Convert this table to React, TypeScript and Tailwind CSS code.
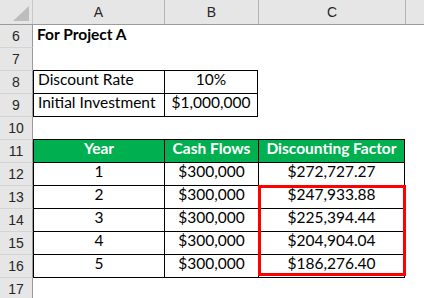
import cn from 'clsx';

// Hoja de cálculo: descuento de flujos de caja, Proyecto A
const rows = [
  { n: 12, year: '1', flow: '$300,000', factor: '$272,727.27' },
  { n: 13, year: '2', flow: '$300,000', factor: '$247,933.88' },
  { n: 14, year: '3', flow: '$300,000', factor: '$225,394.44' },
  { n: 15, year: '4', flow: '$300,000', factor: '$204,904.04' },
  { n: 16, year: '5', flow: '$300,000', factor: '$186,276.40' },
];

const cell = 'h-full flex items-end pb-[2px] px-[4px] whitespace-nowrap';

const RowNum = ({ n }: { n: number }) => (
  <div className="w-[33px] h-full shrink-0 flex items-center justify-center bg-[#e6e6e6] border-r border-b border-r-[#9b9b9b] border-b-[#d4d4d4] text-[14px] text-[#262626] font-['Liberation_Sans',sans-serif]">
    {n}
  </div>
);

export default function App() {
  return (
    <div className="w-[424px] h-[298px] overflow-hidden bg-white font-['Lato',sans-serif] text-[15.5px] text-black relative">
      {/* column headers */}
      <div className="flex h-[25px] bg-[#e6e6e6] border-b border-[#9b9b9b] font-['Liberation_Sans',sans-serif] text-[14px] text-[#262626]">
        <div className="w-[33px] shrink-0 border-r border-[#c8c8c8] flex items-end justify-end pr-[3px] pb-[3px]">
          <svg width="16" height="15" viewBox="0 0 16 15">
            <polygon points="16,0 16,15 0,15" fill="#bdbdbd" />
          </svg>
        </div>
        <div className="w-[131px] flex items-center justify-center">A</div>
        <div className="w-[94px] flex items-center justify-center border-l border-[#b4b4b4]">B</div>
        <div className="w-[147px] flex items-center justify-center border-l border-[#b4b4b4]">C</div>
        <div className="flex-1 border-l border-[#b4b4b4]" />
      </div>

      {/* rows 6-11 */}
      <div className="flex h-[23px]">
        <RowNum n={6} />
        <div className={cn(cell, 'w-[131px] font-bold')}>For Project A</div>
      </div>
      <div className="flex h-[23px]">
        <RowNum n={7} />
        <div className="w-[131px] border-b border-black" />
        <div className="w-[94px] border-b border-black" />
      </div>
      <div className="flex h-[23px]">
        <RowNum n={8} />
        <div className={cn(cell, 'w-[131px] border-l border-b border-black')}>Discount Rate</div>
        <div className={cn(cell, 'w-[94px] border-l border-r border-b border-black justify-center')}>10%</div>
      </div>
      <div className="flex h-[23px]">
        <RowNum n={9} />
        <div className={cn(cell, 'w-[131px] border-l border-b border-black')}>Initial Investment</div>
        <div className={cn(cell, 'w-[94px] border-l border-r border-b border-black justify-center')}>$1,000,000</div>
      </div>
      <div className="flex h-[23px]">
        <RowNum n={10} />
        <div className="w-[131px] border-b border-black" />
        <div className="w-[94px] border-b border-black" />
        <div className="w-[147px] border-b border-black" />
      </div>
      <div className="flex h-[23px]">
        <RowNum n={11} />
        <div className={cn(cell, 'w-[131px] border-l border-b border-black justify-center bg-[#00b050] text-white font-bold')}>Year</div>
        <div className={cn(cell, 'w-[94px] border-l border-b border-black justify-center bg-[#00b050] text-white font-bold')}>Cash Flows</div>
        <div className={cn(cell, 'w-[147px] border-l border-r border-b border-black justify-center bg-[#00b050] text-white font-bold')}>Discounting Factor</div>
      </div>

      {rows.map((r) => (
        <div key={r.n} className="flex h-[23px]">
          <RowNum n={r.n} />
          <div className={cn(cell, 'w-[131px] border-l border-b border-black justify-center')}>{r.year}</div>
          <div className={cn(cell, 'w-[94px] border-l border-b border-black justify-center')}>{r.flow}</div>
          <div className={cn(cell, 'w-[147px] border-l border-r border-b border-black justify-center')}>{r.factor}</div>
        </div>
      ))}

      <div className="flex h-[23px]">
        <RowNum n={17} />
      </div>

      {/* highlight box */}
      <div className="absolute left-[258px] top-[185px] w-[148px] h-[91px] border-[3px] border-[#ff0000] pointer-events-none" />
    </div>
  );
}
